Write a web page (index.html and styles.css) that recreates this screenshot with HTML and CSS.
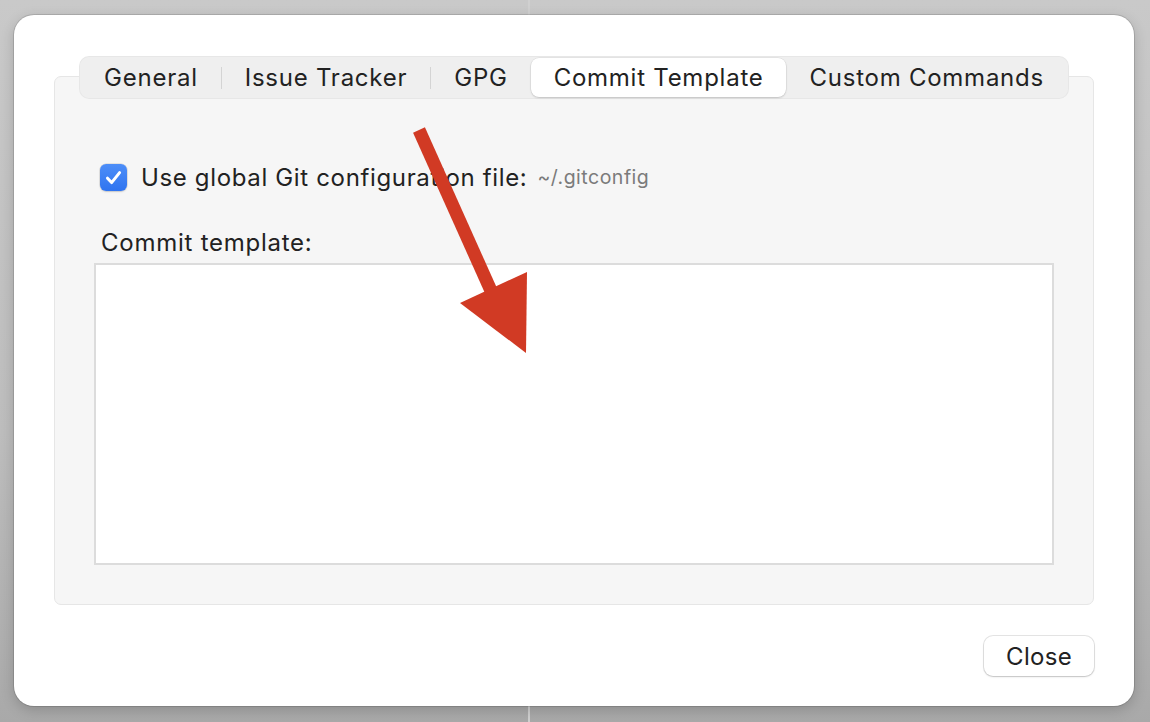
FILE: index.html
```html
<!DOCTYPE html>
<html lang="en">
<head>
<meta charset="utf-8">
<title>Repository Settings</title>
<link rel="stylesheet" href="styles.css">
</head>
<body>
<div class="backdrop">
  <div class="bg-line"></div>
  <div class="dialog">
    <div class="tabs">
      <div class="tab">General</div>
      <div class="sep"></div>
      <div class="tab">Issue Tracker</div>
      <div class="sep"></div>
      <div class="tab">GPG</div>
      <div class="tab active">Commit Template</div>
      <div class="tab">Custom Commands</div>
    </div>
    <div class="panel">
      <label class="check-row">
        <span class="checkbox">
          <svg viewBox="0 0 27 27" width="27" height="27"><path d="M7.5 14.2 L11.6 18.6 L19.6 8.6" fill="none" stroke="#fff" stroke-width="3" stroke-linecap="round" stroke-linejoin="round"/></svg>
        </span>
        <span class="check-label">Use global Git configuration file:</span>
        <span class="path">~/.gitconfig</span>
      </label>
      <div class="field-label">Commit template:</div>
      <div class="textarea"></div>
    </div>
    <div class="footer">
      <button class="btn">Close</button>
    </div>
    <svg class="arrow" viewBox="0 0 1120 691" width="1120" height="691">
      <line x1="405" y1="115" x2="478" y2="278" stroke="#d13a24" stroke-width="13"/>
      <polygon points="446,288 513,257 512,338" fill="#d13a24"/>
    </svg>
  </div>
</div>
</body>
</html>
```
FILE: styles.css
```css
* { box-sizing: border-box; }
html, body { margin: 0; padding: 0; }
body {
  width: 1150px;
  height: 722px;
  overflow: hidden;
  font-family: Inter, "Noto Sans", sans-serif;
  color: #222;
}
.backdrop {
  position: relative;
  width: 1150px;
  height: 722px;
  padding: 15px 16px 16px 14px;
  background: linear-gradient(180deg, #c9c9c9 0%, #bdbdbd 60%, #a9a9a9 100%);
}
.bg-line {
  position: absolute;
  left: 528px;
  top: 0;
  width: 2px;
  height: 722px;
  background: #d0d0d0;
}
.dialog {
  position: relative;
  width: 1120px;
  height: 691px;
  background: #fff;
  border-radius: 20px;
  box-shadow: 0 0 0 1px rgba(0,0,0,0.12), 0 4px 14px rgba(0,0,0,0.18);
  padding: 41px 40px 30px 40px;
  display: flex;
  flex-direction: column;
}
.tabs {
  position: relative;
  z-index: 2;
  align-self: center;
  display: flex;
  align-items: center;
  height: 43px;
  padding: 2px;
  background: #efefef;
  border-radius: 10px;
  box-shadow: inset 0 0 0 1px rgba(0,0,0,0.03);
}
.tab {
  height: 39px;
  display: flex;
  align-items: center;
  padding: 0 23px;
  font-size: 24px;
  letter-spacing: 0.75px;
  color: #222;
  border-radius: 8px;
  white-space: nowrap;
}
.tab.active {
  background: #fff;
  box-shadow: 0 1px 2px rgba(0,0,0,0.15), 0 0 0 0.5px rgba(0,0,0,0.08);
}
.sep {
  width: 1px;
  height: 22px;
  background: #d4d4d4;
}
.panel {
  margin-top: -23px;
  height: 529px;
  background: #f6f6f6;
  border: 1px solid #e6e6e6;
  border-radius: 7px;
  padding: 86px 39px 39px 39px;
  display: flex;
  flex-direction: column;
}
.check-row {
  display: flex;
  align-items: center;
  height: 28px;
  padding-left: 6px;
}
.checkbox {
  width: 27px;
  height: 27px;
  border-radius: 6px;
  background: linear-gradient(180deg, #4d8ef8, #2f74f0);
  box-shadow: 0 0 0 0.5px rgba(0,0,0,0.15), 0 1px 2px rgba(0,0,0,0.12);
  display: flex;
}
.check-label {
  margin-left: 14px;
  font-size: 24px;
  letter-spacing: 0.65px;
  color: #222;
}
.path {
  margin-left: 10px;
  font-size: 19.5px;
  letter-spacing: 0.5px;
  color: #7b7b7b;
}
.field-label {
  margin-top: 36px;
  padding-left: 7px;
  font-size: 24px;
  letter-spacing: 0.75px;
  color: #222;
  height: 32px;
  line-height: 32px;
}
.textarea {
  margin-top: 4px;
  height: 303px;
  background: #fff;
  border: 2px solid #dcdcdc;
}
.footer {
  margin-top: auto;
  display: flex;
  justify-content: flex-end;
}
.btn {
  width: 110px;
  height: 40px;
  background: #fff;
  border: none;
  border-radius: 9px;
  box-shadow: 0 0 0 1px rgba(0,0,0,0.1), 0 1px 2px rgba(0,0,0,0.15);
  font-family: Inter, "Noto Sans", sans-serif;
  font-size: 24px;
  letter-spacing: 0.3px;
  color: #222;
  padding: 0;
}
.arrow {
  position: absolute;
  left: 0;
  top: 0;
  z-index: 5;
  pointer-events: none;
}
```
